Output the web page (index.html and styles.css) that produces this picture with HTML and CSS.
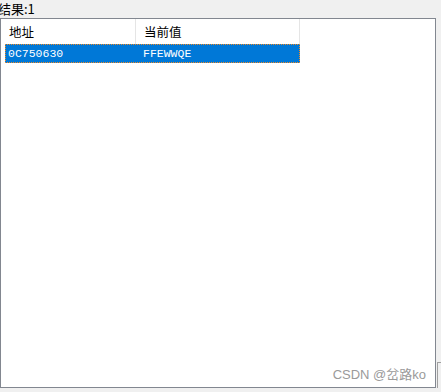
FILE: index.html
```html
<!DOCTYPE html>
<html lang="zh">
<head>
  <meta charset="UTF-8" />
  <title>结果</title>
  <link rel="stylesheet" href="styles.css">
</head>
<body>
  <div class="result-label">结果:1</div>
  <div class="list-view">
    <div class="list-head">
      <div class="col col-addr">地址</div>
      <div class="col col-value">当前值</div>
    </div>
    <div class="list-row selected">
      <div class="cell cell-addr">0C750630</div>
      <div class="cell cell-value">FFEWWQE</div>
    </div>
    <div class="watermark">CSDN @岔路ko</div>
  </div>
  <div class="edge-mark"></div>
</body>
</html>
```

FILE: styles.css
```css
* {
    margin: 0;
    padding: 0;
    box-sizing: border-box;
}

body {
    width: 441px;
    height: 392px;
    background: #f0f0f0;
    font-family: "Noto Sans CJK SC", "Liberation Sans", sans-serif;
    position: relative;
    overflow: hidden;
}

.result-label {
    height: 18px;
    margin-left: -2px;
    font-size: 13px;
    line-height: 17px;
    color: #000;
}

.list-view {
    position: relative;
    width: 436px;
    height: 370px;
    background: #ffffff;
    border: 1px solid #828790;
}

.list-head {
    display: flex;
    height: 25px;
    background: #ffffff;
}

.col {
    font-size: 12.5px;
    line-height: 26px;
    color: #000;
    padding-left: 8px;
    border-right: 1px solid #e5e5e5;
}

.col-addr {
    width: 135px;
}

.col-value {
    width: 164px;
}

.list-row {
    display: flex;
    height: 19px;
    width: 295px;
    margin-left: 4px;
    font-family: "Liberation Mono", monospace;
    font-size: 11.5px;
    line-height: 20px;
}

.list-row.selected {
    background: #0078d7;
    color: #ffffff;
    outline: 1px dotted #f08a24;
    outline-offset: -1px;
}

.cell-addr {
    width: 134px;
    padding-left: 3px;
}

.cell-value {
    padding-left: 4px;
}

.watermark {
    position: absolute;
    right: 9px;
    bottom: 4px;
    font-family: "Liberation Sans", "Noto Sans CJK SC", sans-serif;
    font-size: 13px;
    color: #9a9a9a;
}

.edge-mark {
    position: absolute;
    left: 437px;
    top: 362px;
    width: 6px;
    height: 26px;
    border-left: 1px solid #a0a0a0;
    border-top: 1px solid #a0a0a0;
}
```
